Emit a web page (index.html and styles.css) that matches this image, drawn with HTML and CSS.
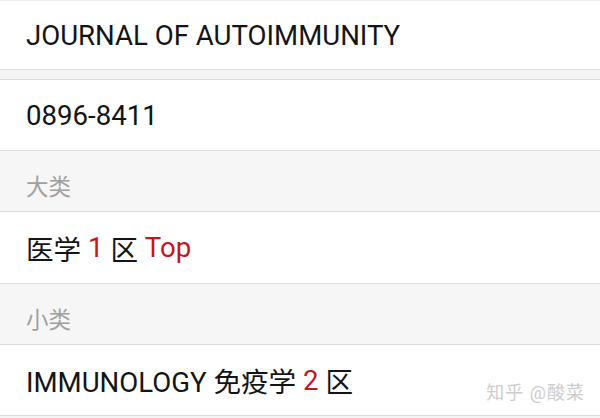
FILE: index.html
```html
<!DOCTYPE html>
<html lang="zh-CN">
<head>
  <meta charset="UTF-8" />
  <meta name="viewport" content="width=device-width, initial-scale=1.0"/>
  <title>期刊分区</title>
  <link rel="stylesheet" href="styles.css">
</head>
<body>

  <div class="list">
    <div class="cell title">JOURNAL OF AUTOIMMUNITY</div>
    <div class="spacer"></div>
    <div class="cell">0896-8411</div>

    <div class="group">大类</div>
    <div class="cell tall">医学 <span class="red">1</span> 区 <span class="red">Top</span></div>

    <div class="group">小类</div>
    <div class="cell">IMMUNOLOGY 免疫学 <span class="red">2</span> 区</div>
  </div>

  <div class="mark">知乎 @酸菜</div>

</body>
</html>
```

FILE: styles.css
```css
* {
  box-sizing: border-box;
}

body {
  margin: 0;
  padding: 0;
  background: #f4f4f4;
  font-family: Roboto, "Noto Sans CJK SC", sans-serif;
  color: #141414;
  border-top: 1px solid #ececec;
  position: relative;
  height: 418px;
  overflow: hidden;
}

.list {
  display: flex;
  flex-direction: column;
}

.cell {
  height: 71px;
  padding-left: 26px;
  display: flex;
  align-items: center;
  background: #fff;
  border-bottom: 1px solid #dcdcdc;
  font-size: 27.6px;
  white-space: pre;
}

.cell.title {
  height: 69px;
}

.cell.tall {
  height: 72px;
}

.spacer {
  height: 10px;
  background: #f4f4f4;
  border-bottom: 1px solid #dcdcdc;
}

.group {
  height: 61px;
  padding: 8px 0 0 26px;
  display: flex;
  align-items: center;
  background: #f6f6f6;
  border-bottom: 1px solid #dcdcdc;
  font-size: 22.5px;
  color: #a0a0a0;
}

.red {
  color: #c4161c;
}

/* watermark in the lower right corner */
.mark {
  position: absolute;
  right: 15px;
  bottom: 14px;
  font-size: 18px;
  color: #cdcdcd;
  text-shadow: 0 0 1px #fff;
  letter-spacing: 1px;
}
```
